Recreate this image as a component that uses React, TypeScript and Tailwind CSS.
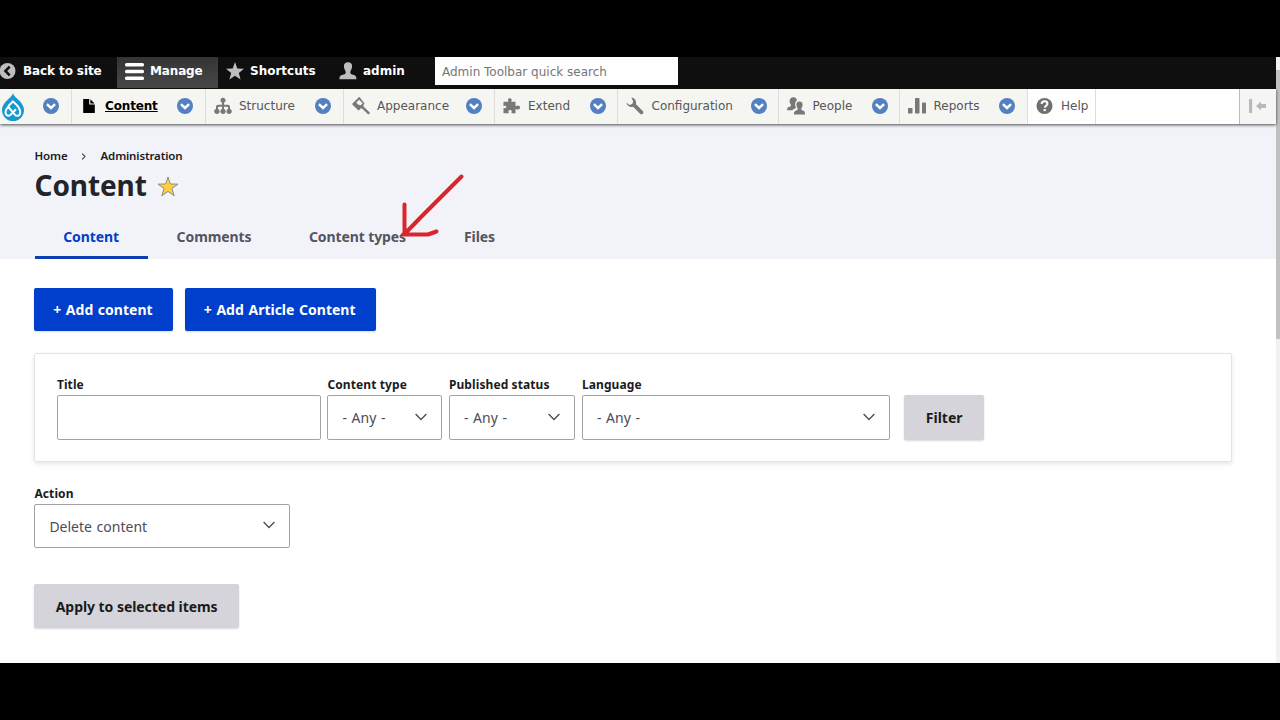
import type { ReactNode } from "react";
import clsx from "clsx";

type TrayItem = {
  label: string;
  width: string;
  icon: ReactNode;
  active?: boolean;
  leaf?: boolean;
};

const FileIcon = () => (
  <svg viewBox="0 0 18 18" className="h-[18px] w-[18px]" fill="#000">
    <path d="M3.2 2h6v5.6h5.6V16H3.2z" />
    <path d="M10.4 2.2l4.2 4.3h-4.2z" />
  </svg>
);

const StructureIcon = () => (
  <svg viewBox="0 0 18 18" className="h-[18px] w-[18px]" fill="#787878">
    <circle cx="9" cy="3.2" r="2.5" />
    <path d="M8 4h2v10H8zM2 13.5V10c0-1.300.9-2.200 2.200-2.200h9.600c1.300 0 2.200.9 2.200 2.200v3.500h-2v-3c0-.5-.3-.7-.8-.7H4.800c-.5 0-.8.2-.8.7v3z" />
    <circle cx="2.900" cy="14.300" r="2.600" />
    <circle cx="9" cy="14.300" r="2.600" />
    <circle cx="15.100" cy="14.300" r="2.600" />
  </svg>
);

const AppearanceIcon = () => (
  <svg viewBox="0 0 18 18" className="h-[18px] w-[18px]" fill="#787878">
    <path d="M6.600.4L.5 6.500c-.5.500-.2 1 .2 1.400l5.300 5c.5.400 1 .4 1.400 0l1.500-1.600 1.400.4 5.500 5.300c1.200.7 2.500-.6 1.700-1.800l-5.800-5.400-.4-1.600.8-1c.4-.5.4-.9 0-1.300L7.900.4c-.4-.4-.9-.4-1.300 0zM7.200 2.700l3.500 3.500-2 2-2.800-.8-1.600-2z" fillRule="evenodd" />
  </svg>
);

const ExtendIcon = () => (
  <svg viewBox="0 0 19 18" className="h-[18px] w-[19px]" fill="#787878">
    <path d="M.5 4.500h4.800c.5 0 .6-.4.3-.8-.9-1.300-.2-2.900 1.600-2.900s2.500 1.600 1.600 2.900c-.3.4-.1.8.4.8h4v4.200c0 .5.4.7.800.400 1.600-1.100 4-.5 4 1.600s-2.400 2.600-4 1.600c-.4-.3-.8-.1-.8.4v4H9.400c-.5 0-.6-.4-.4-.8.7-1.500 0-2.800-1.500-2.800S5.300 14.400 6 15.900c.2.400.1.8-.4.8H.5v-5.200c0-.5.300-.6.700-.4 1.200.6 2.200.1 2.200-1s-1-1.700-2.200-1c-.4.2-.7 0-.7-.4z" />
  </svg>
);

const WrenchIcon = () => (
  <svg viewBox="0 0 18 18" className="h-[18px] w-[18px]" fill="#787878">
    <path d="M5.300.5c2.700.2 4.700 2.300 4.800 4.900 0 .6-.1 1.200-.3 1.700l7 6.900c.8.800.8 2 0 2.700-.8.800-2 .8-2.700 0l-7-7c-.6.300-1.300.4-2 .3C2.700 9.800.7 8 .4 5.500l3 2.400 2.800-.8 1-2.700z" />
  </svg>
);

const PeopleIcon = () => (
  <svg viewBox="0 0 18 18" className="h-[18px] w-[18px]" fill="#787878">
    <path d="M6.500.3c2.200 0 3.400 1.400 3.300 3.300-1.400 1-1.900 2.900-1.500 5.100.1.700.4 1.300.7 1.800l-.3.800-2.500 1-.6 1H0c.1-2 .5-2.800 1.700-3.200l1.600-.6c.8-.4.8-1.500.3-2.200-.7-1.100-1-2.200-1-3.300C2.600 1.800 4.100.3 6.500.3z" />
    <path d="M12.500 4.500c2 0 3.300 1.400 3.100 3.600-.1 1.200-.5 2.100-1 2.900-.5.800-.4 2 .5 2.300l1.300.5c1.200.4 1.700 1.500 1.600 3.600H6.900c0-2.100.4-3.200 1.700-3.600l1.300-.5c.9-.3 1-1.500.5-2.300-.5-.8-.9-1.700-1-2.900-.2-2.200 1.100-3.600 3.100-3.600z" />
  </svg>
);

const ReportsIcon = () => (
  <svg viewBox="0 0 18 18" className="h-[18px] w-[18px]" fill="#787878">
    <rect x="0" y="11" width="4.500" height="5.500" rx=".8" />
    <rect x="7" y="1" width="4.500" height="15.500" rx=".8" />
    <rect x="14" y="5.500" width="4" height="11" rx=".8" />
  </svg>
);

const HelpIcon = () => (
  <svg viewBox="0 0 18 18" className="h-[18px] w-[18px]">
    <circle cx="8.500" cy="9" r="8" fill="#6f6f6f" />
    <path d="M5.600 6.900C5.700 5.200 6.900 4.300 8.500 4.300s2.900.9 2.900 2.400c0 2-2.400 2-2.600 4" fill="none" stroke="#fff" strokeWidth="2.100" />
    <rect x="7.600" y="12" width="2.200" height="2.200" fill="#fff" />
  </svg>
);

const DropdownDot = () => (
  <svg viewBox="0 0 16 16" className="h-4 w-4">
    <circle cx="8" cy="8" r="8" fill="#5380c1" />
    <path d="M3.900 6.200L8 10l4.100-3.800" fill="none" stroke="#fff" strokeWidth="2.500" />
  </svg>
);

const trayItems: TrayItem[] = [
  { label: "Content", width: "w-[134px]", icon: <FileIcon />, active: true },
  { label: "Structure", width: "w-[138px]", icon: <StructureIcon /> },
  { label: "Appearance", width: "w-[151px]", icon: <AppearanceIcon /> },
  { label: "Extend", width: "w-[123.500px]", icon: <ExtendIcon /> },
  { label: "Configuration", width: "w-[161px]", icon: <WrenchIcon /> },
  { label: "People", width: "w-[121px]", icon: <PeopleIcon /> },
  { label: "Reports", width: "w-[127.500px]", icon: <ReportsIcon /> },
  { label: "Help", width: "w-[68px]", icon: <HelpIcon />, leaf: true },
];

function TopBar() {
  return (
    <div className="flex h-8 bg-[#0f0f0f] text-[12px] font-bold text-white">
      <div className="flex h-[31px] w-[117px] items-center pb-[3px]">
        <svg viewBox="0 0 16 16" className="mr-[7px] h-4 w-4 shrink-0">
          <circle cx="7.500" cy="8" r="8" fill="#bebebe" />
          <path d="M9.700 3.700L5.400 8l4.300 4.300" fill="none" stroke="#0f0f0f" strokeWidth="2.500" />
        </svg>
        <span className="whitespace-nowrap tracking-[-0.1px]">Back to site</span>
      </div>
      <div className="flex h-[31px] w-[101px] items-center bg-linear-to-b from-[#343434] to-[#484848] pb-[3px] pl-2">
        <svg viewBox="0 0 19 17" className="mr-[6px] h-[17px] w-[19px] shrink-0" fill="#fff">
          <rect y="0" width="19" height="3.400" rx="1.500" />
          <rect y="6.800" width="19" height="3.400" rx="1.500" />
          <rect y="13.600" width="19" height="3.400" rx="1.500" />
        </svg>
        <span className="tracking-[-0.15px]">Manage</span>
      </div>
      <div className="flex h-[31px] w-[121px] items-center pb-[3px] pl-2">
        <svg viewBox="0 0 18 18" className="mr-[6px] h-[18px] w-[18px] shrink-0" fill="#bebebe">
          <path d="M9 0l2.300 6.400 6.700.3-5.200 4.200 1.800 6.600L9 13.800l-5.600 3.700 1.800-6.600L0 6.700l6.700-.3z" />
        </svg>
        <span>Shortcuts</span>
      </div>
      <div className="flex h-[31px] w-[96px] items-center pb-[3px]">
        <svg viewBox="0 0 18 18" className="mr-[6px] h-[18px] w-[18px] shrink-0" fill="#bebebe">
          <path d="M9 .3c2.800 0 4.300 1.700 4.100 4.300-.1 1.600-.6 3-1.400 4.200-.7 1.100-.6 2.900.7 3.400l2.500.9c1.800.7 2.500 1.600 2.500 4.200H.4c0-2.600.7-3.500 2.500-4.200l2.700-.9c1.300-.5 1.400-2.300.7-3.400-.8-1.200-1.300-2.600-1.400-4.200C4.700 2 6.200.3 9 .3z" />
        </svg>
        <span>admin</span>
      </div>
      <input
        className="h-[28px] w-[243px] bg-white px-[7px] pt-px font-normal text-[#757575] placeholder:text-[#757575]"
        placeholder="Admin Toolbar quick search"
      />
    </div>
  );
}

function Tray() {
  return (
    <div className="relative flex h-[35px] bg-white text-[12px] text-[#565656] shadow-[0_1px_3px_rgba(0,0,0,0.7)]">
      <div className="flex w-[71.500px] items-center border-r border-[#ddd] bg-[#f5f5f2]">
        <svg viewBox="0 0 22 28" className="ml-[2px] h-[28px] w-[22px]">
          <path d="M15.300 5.800C13.200 3.900 11.600 2.400 11 0c-.6 2.400-2.200 3.900-4.300 5.800C3.600 8.800 0 12.200 0 17.200a11 11 0 0 0 22 0c0-5-3.600-8.400-6.700-11.400z" fill="#1699d0" />
          <path d="M6.200 13.300L11 8.400c3.400 3.100 7.200 5.900 7.200 10.600 0 4.500-3.600 4.700-5.600 2.300L6.200 13.800C4.200 16 3 18.200 3.700 20.700c1 2.700 3.700 2.500 5.400.6l4.900-5" fill="none" stroke="#fff" strokeWidth="2" />
        </svg>
        <span className="mb-[2px] ml-[19px]">
          <DropdownDot />
        </span>
      </div>
      {trayItems.map((item) => (
        <div
          key={item.label}
          className={clsx(
            "flex items-center border-r border-[#ddd] pb-[2px] pl-[8px]",
            item.width,
            item.leaf ? "bg-white" : "bg-[#f5f5f2]"
          )}
        >
          <span className="flex w-[18px] shrink-0">{item.icon}</span>
          <span
            className={clsx(
              "ml-[7.500px] whitespace-nowrap",
              item.active && "font-bold tracking-[-0.15px] text-black underline underline-offset-1"
            )}
          >
            {item.label}
          </span>
          {!item.leaf && (
            <span className="mr-[11.500px] ml-auto">
              <DropdownDot />
            </span>
          )}
        </div>
      ))}
      <div className="ml-auto flex w-[37px] items-center border-l border-[#bbb] bg-[#f5f5f5] pb-px pl-[9px]">
        <svg viewBox="0 0 18 14" className="h-[14px] w-[18px]" fill="#b9b9b9">
          <path d="M0 0h3.200v14H0zM7 7l5-4.500V5h5v4h-5v2.500z" />
        </svg>
      </div>
    </div>
  );
}

const tabs = [
  { label: "Content", width: "w-[113px]", active: true },
  { label: "Comments", width: "w-[133px]" },
  { label: "Content types", width: "w-[154px]" },
  { label: "Files", width: "w-[90px]" },
];

function PageHeader() {
  return (
    <header className="relative h-[135px] bg-[#f2f3f9] pl-[34.500px]">
      <nav className="flex h-[64px] items-end text-[11.500px] leading-[16px] font-semibold tracking-[-0.15px] text-[#1b1b1d]">
        <span className="mb-[24px] flex w-[66px] items-center">
          Home
          <svg viewBox="0 0 5 8" className="mt-px ml-[14px] h-[7px] w-[5px]" fill="none" stroke="#333" strokeWidth="1.200">
            <path d="M1 .8L4.200 4 1 7.200" />
          </svg>
        </span>
        <span className="mb-[24px]">Administration</span>
      </nav>
      <div className="-mt-[22px] flex h-[38px] items-center">
        <h1 className="text-[28px] leading-[38px] font-bold tracking-[-0.1px] text-[#232429]">Content</h1>
        <svg viewBox="0 0 22 21" className="mt-[2px] ml-[10.500px] h-[21px] w-[22px]">
          <path d="M11 1l2.400 7 7.600.1-6.100 4.400 2.300 7.300-6.200-4.400-6.200 4.400 2.300-7.300L1 8.100 8.600 8z" fill="#fdd03a" stroke="#8d8d8d" />
        </svg>
      </div>
      <div className="mt-[11px] flex h-[44px] text-[14px] font-bold tracking-[-0.1px] text-[#545560]">
        {tabs.map((tab) => (
          <div
            key={tab.label}
            className={clsx(
              "flex justify-center border-b-[3px] pt-[12px] whitespace-nowrap leading-[20px]",
              tab.width,
              tab.active ? "border-[#0c3fb4] text-[#003ecc]" : "border-transparent"
            )}
          >
            {tab.label}
          </div>
        ))}
      </div>
      {/* hand drawn pointer over the tabs */}
      <svg viewBox="0 0 70 70" className="absolute top-[46px] left-[397px] h-[70px] w-[70px]" fill="none" stroke="#d9252c" strokeWidth="4" strokeLinecap="round" strokeLinejoin="round">
        <path d="M64.500 6.500L41 30 25 46 7.500 64M7.500 34.500v28M6 64.500h25L39.500 61.500" />
      </svg>
    </header>
  );
}

function Select({ label, value, width }: { label: string; value: string; width: string }) {
  return (
    <label className="block">
      <span className="block text-[12px] leading-[20px] font-bold tracking-[0.1px] whitespace-nowrap text-[#1b1b1d]">
        {label}
      </span>
      <span
        className={clsx(
          "flex h-[44.500px] items-center justify-between rounded-[2px] border border-[#a3a3a6] bg-white px-[14px] text-[14px] text-[#4c4d55]",
          width
        )}
      >
        <span className="pt-px [word-spacing:1px]">{value}</span>
        <svg viewBox="0 0 12 8" className="mb-px h-2 w-3" fill="none" stroke="#4a4a50" strokeWidth="1.300">
          <path d="M.6 1L6 6.500 11.400 1" />
        </svg>
      </span>
    </label>
  );
}

function Button({ children, className }: { children: ReactNode; className: string }) {
  return (
    <button
      className={clsx(
        "rounded-[2px] text-center text-[14px] font-bold whitespace-nowrap shadow-[0_1px_2px_rgba(0,0,0,0.15)]",
        className
      )}
    >
      {children}
    </button>
  );
}

export default function App() {
  return (
    <div className="h-[720px] w-[1280px] overflow-hidden bg-black pt-[57px] font-['Noto_Sans','Open_Sans',sans-serif]">
      <div className="flex h-[605.500px] overflow-hidden bg-white">
        <div className="w-[1276px]">
          <div className="relative z-10 font-['DejaVu_Sans',sans-serif]">
            <TopBar />
            <Tray />
          </div>
          <PageHeader />
          <main className="pl-[34.400px]">
            <div className="flex gap-[11.500px] pt-[29px]">
              <Button className="h-[43px] w-[139px] bg-[#003ecc] pr-[2px] [word-spacing:1px] text-white">+ Add content</Button>
              <Button className="h-[43px] w-[191.500px] bg-[#003ecc] pr-[2px] [word-spacing:1px] text-white">
                + Add Article Content
              </Button>
            </div>
            <div className="mt-[22px] flex h-[109px] w-[1197.500px] rounded-[2px] border border-[#e3e3e6] pt-[21px] pl-[21.500px] shadow-[0_2px_4px_rgba(0,0,0,0.1)]">
              <label className="mr-[6.500px] block">
                <span className="block text-[12px] leading-[20px] font-bold tracking-[0.1px] text-[#1b1b1d]">Title</span>
                <input className="block h-[44.500px] w-[264px] rounded-[2px] border border-[#a3a3a6]" />
              </label>
              <div className="flex gap-[7px]">
                <Select label="Content type" value="- Any -" width="w-[114.500px]" />
                <Select label="Published status" value="- Any -" width="w-[126px]" />
                <Select label="Language" value="- Any -" width="w-[308px]" />
              </div>
              <Button className="mt-[20px] ml-[14.500px] h-[44.500px] w-[79.500px] bg-[#d4d4da] text-[#1b1b1d]">Filter</Button>
            </div>
            <div className="mt-[21.500px]">
              <Select label="Action" value="Delete content" width="w-[256px]" />
            </div>
            <Button className="mt-[36px] h-[44px] w-[204.500px] bg-[#d4d4da] tracking-[-0.05px] text-[#1b1b1d]">
              Apply to selected items
            </Button>
          </main>
        </div>
        <div className="w-1 bg-[#f1f1f1] pt-[13px]">
          <div className="h-[269px] w-[4px] bg-[#c1c1c1]" />
        </div>
      </div>
    </div>
  );
}
